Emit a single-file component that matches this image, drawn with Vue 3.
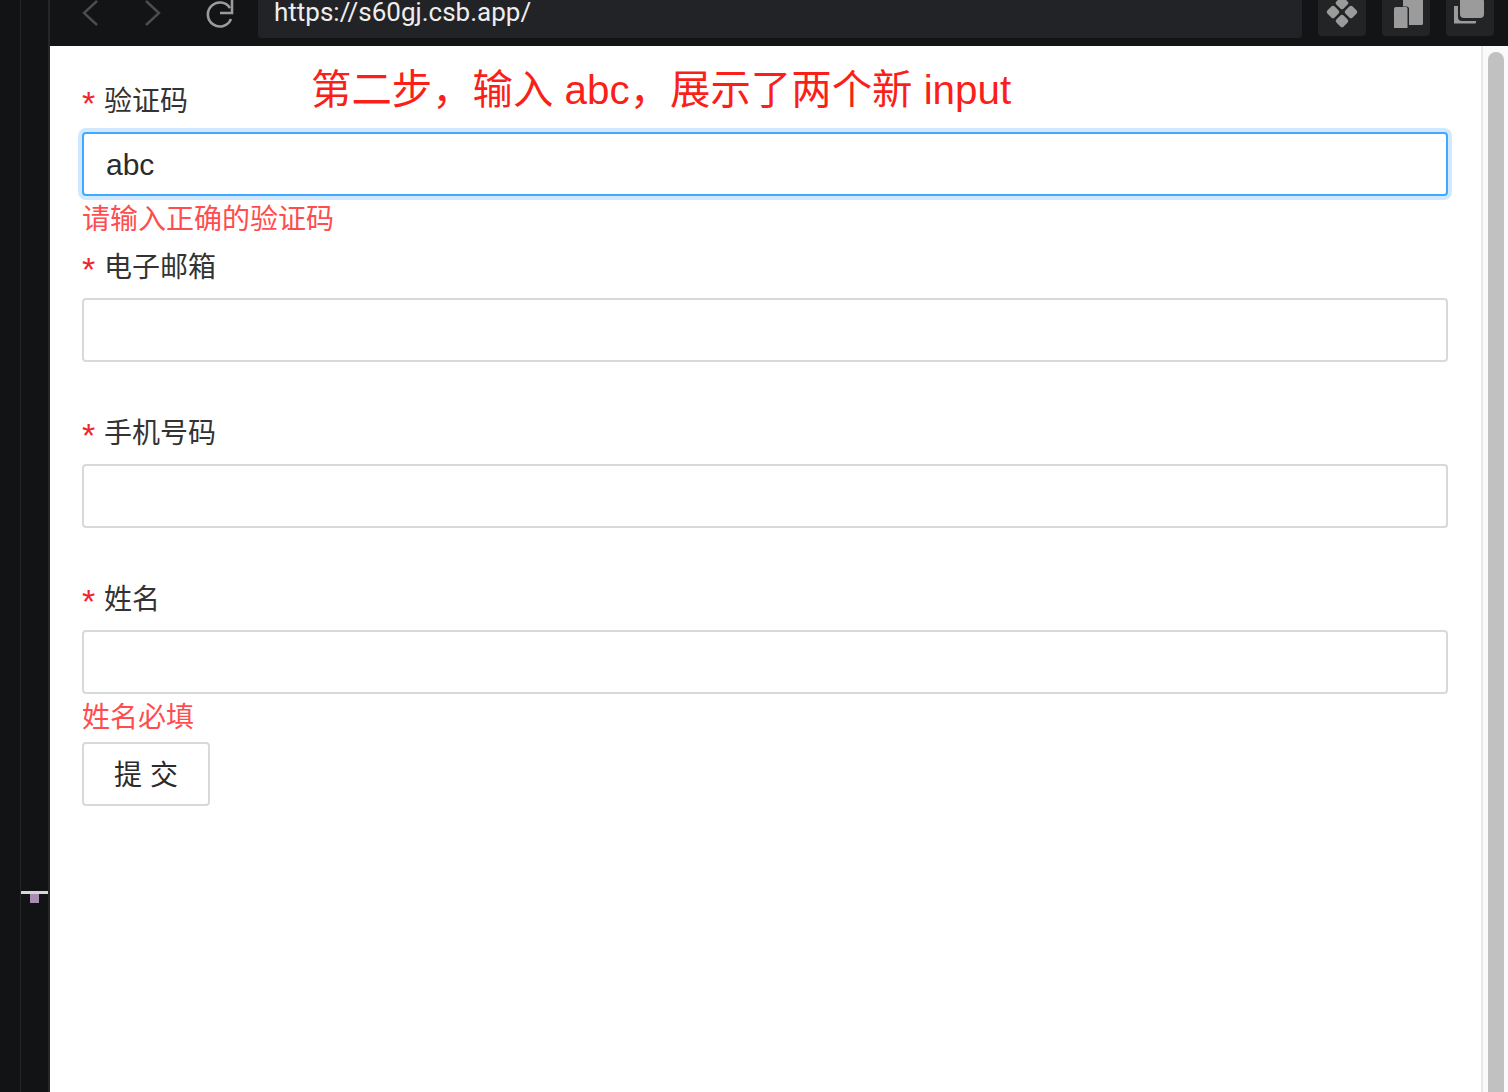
<script setup>
const fields = [
  { label: '验证码', value: 'abc', focused: true, error: '请输入正确的验证码' },
  { label: '电子邮箱', value: '' },
  { label: '手机号码', value: '' },
  { label: '姓名', value: '', error: '姓名必填' },
]
</script>

<template>
  <div class="shell">
    <aside class="rail">
      <div class="rail-inner"></div>
      <div class="marker"><span class="marker-dot"></span></div>
    </aside>
    <div class="window">
      <header class="toolbar">
        <nav class="nav">
          <svg class="nav-icon nav-back" viewBox="0 0 18 28" width="18" height="28"><path d="M16 1 3 13l13 12" fill="none" stroke="#4c4d4f" stroke-width="2.4"/></svg>
          <svg class="nav-icon nav-forward" viewBox="0 0 18 28" width="18" height="28"><path d="M2 1l13 12L2 25" fill="none" stroke="#4c4d4f" stroke-width="2.4"/></svg>
          <svg class="nav-icon nav-reload" viewBox="0 0 30 28" width="30" height="28"><path d="M24 8a12 12 0 1 0 1 11" fill="none" stroke="#9a9b9d" stroke-width="2.6"/><path d="M14 13h12V0" fill="none" stroke="#9a9b9d" stroke-width="2.6"/></svg>
        </nav>
        <div class="url">https://s60gj.csb.app/</div>
        <div class="tools">
          <button class="tool">
            <svg viewBox="0 0 48 36" width="48" height="36" fill="#9b9b9b">
              <rect x="19" y="-2" width="10" height="10" rx="2" transform="rotate(45 24 3)"/>
              <rect x="10" y="7" width="10" height="10" rx="2" transform="rotate(45 15 12)"/>
              <rect x="28" y="7" width="10" height="10" rx="2" transform="rotate(45 33 12)"/>
              <rect x="19" y="16" width="10" height="10" rx="2" transform="rotate(45 24 21)"/>
            </svg>
          </button>
          <button class="tool">
            <svg viewBox="0 0 48 36" width="48" height="36" fill="#9b9b9b">
              <path d="M21-2h20v25.500a1.500 1.500 0 0 1-1.500 1.500H27V9q0-2.500-2.500-2.500H21z"/>
              <path d="M14 7h10q1.500 0 1.500 1.500V28H12V9q0-2 2-2z"/>
            </svg>
          </button>
          <button class="tool">
            <svg viewBox="0 0 48 36" width="48" height="36" fill="#9b9b9b">
              <path d="M14-2h20q4 0 4 4v12q0 4-4 4H18q-4 0-4-4z"/>
              <path d="M8 6h4v11q0 4 4 4h14v1.500q0 1-1 1H8z"/>
            </svg>
          </button>
        </div>
      </header>
      <div class="body">
        <main class="page">
          <form class="form" @submit.prevent>
            <div v-for="f in fields" :key="f.label" class="item">
              <label class="label"><span class="req">*</span>{{ f.label }}</label>
              <input class="input" :class="{ focused: f.focused }" :value="f.value" />
              <div class="slot"><div v-if="f.error" class="help">{{ f.error }}</div></div>
            </div>
            <button class="submit" type="button">提 交</button>
          </form>
          <div class="note">第二步，输入 abc，展示了两个新 input</div>
        </main>
        <div class="scrollbar"><div class="thumb"></div></div>
      </div>
    </div>
  </div>
</template>

<style>
html, body { margin: 0; background: #fff; overflow: hidden; }
</style>

<style scoped>
.shell { display: flex; height: 1092px; overflow: hidden; font-family: "Liberation Sans", "Noto Sans CJK SC", sans-serif; }
.rail { position: relative; flex: 0 0 50px; box-sizing: border-box; background: #121315; border-right: 2px solid #252628; }
.rail-inner { margin-left: 20px; width: 1px; height: 100%; background: #252628; }
.marker { position: absolute; left: 21px; top: 891px; width: 27px; height: 3px; background: #d6d6d4; }
.marker-dot { position: absolute; left: 9px; top: 3px; width: 9px; height: 9px; background: #a98db0; }
.window { flex: 1; min-width: 0; display: flex; flex-direction: column; }
.toolbar { flex: 0 0 46px; display: flex; background: #131416; box-sizing: border-box; padding-right: 14px; overflow: hidden; }
.nav { flex: 0 0 208px; position: relative; }
.nav-icon { position: absolute; top: 0; }
.nav-back { left: 31px; }
.nav-forward { left: 94px; }
.nav-reload { left: 156px; }
.url { flex: 1; height: 38px; box-sizing: border-box; padding: 0 0 0 16px; background: #222326; border-radius: 0 0 4px 4px; color: #eeeeee; font: 26px/25px Roboto, sans-serif; white-space: nowrap; }
.tools { display: flex; gap: 16px; margin-left: 16px; }
.tool { width: 48px; height: 36px; padding: 0; border: 0; border-radius: 0 0 4px 4px; background: #232426; display: block; overflow: hidden; }
.tool svg { display: block; }
.body { flex: 1; min-height: 0; display: flex; }
.page { position: relative; flex: 1; min-width: 0; background: #fff; box-sizing: border-box; padding: 32px 33px 0 32px; }
.form { display: flex; flex-direction: column; align-items: stretch; }
.label { display: flex; align-items: center; height: 44px; margin-bottom: 10px; padding-top: 4px; box-sizing: border-box; font-size: 28px; color: #333; line-height: 40px; }
.req { width: 22px; color: #f5222d; font-size: 34px; line-height: 40px; font-family: "Liberation Sans", sans-serif; padding-top: 2px; }
.input { display: block; width: 100%; height: 64px; box-sizing: border-box; border: 2px solid #d9d9d9; border-radius: 4px; outline: 0; padding: 1px 22px 0; font: 30px "Liberation Sans", sans-serif; color: #2b2b2b; background: #fff; }
.input.focused { border-color: #40a9ff; box-shadow: 0 0 0 4px rgba(24, 144, 255, .2); }
.slot { height: 48px; }
.help { color: #ff4d4f; font-size: 28px; line-height: 44px; padding-top: 2px; }
.submit { align-self: flex-start; width: 128px; height: 64px; padding: 0 0 2px; box-sizing: border-box; border: 2px solid #d9d9d9; border-radius: 4px; background: #fff; color: #2b2b2b; font-family: inherit; font-size: 28px; }
.note { position: absolute; left: 261px; top: 19px; font-size: 40.4px; line-height: 50px; color: #fb1f1a; white-space: nowrap; }
.scrollbar { flex: 0 0 27px; box-sizing: border-box; border-left: 2px solid #e8e8e8; background: #fafafa; padding: 6px 4px 0 5px; }
.thumb { height: 100%; background: #c1c1c1; border-radius: 8px 8px 0 0; }
</style>
